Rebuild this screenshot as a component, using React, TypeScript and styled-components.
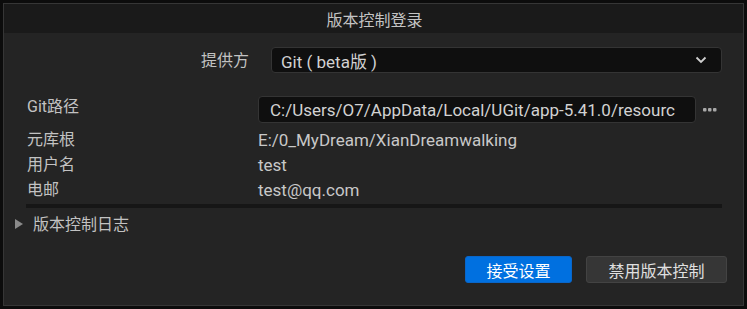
import React from 'react'
import styled, { createGlobalStyle } from 'styled-components'

const GlobalStyle = createGlobalStyle`
  html, body {
    margin: 0;
    padding: 0;
    background: #0c0c0c;
  }
  body {
    font-family: Roboto, 'Noto Sans CJK SC', sans-serif;
  }
`

const Page = styled.div`
  width: 747px;
  height: 309px;
  padding: 3px;
  box-sizing: border-box;
`

const Window = styled.div`
  width: 741px;
  height: 303px;
  box-sizing: border-box;
  border: 1px solid #363636;
  background: #242424;
  display: flex;
  flex-direction: column;
`

const TitleBar = styled.div`
  height: 29px;
  background: #1a1a1a;
  color: #c4c4c4;
  font-size: 16px;
  display: flex;
  align-items: center;
  justify-content: center;
  padding-left: 2px;
`

const Body = styled.div`
  flex: 1;
  display: flex;
  flex-direction: column;
  padding: 14px 21px 0 0;
`

const ProviderRow = styled.div`
  display: flex;
  justify-content: flex-end;
  align-items: center;
  gap: 22px;
`

const Label = styled.div`
  color: #c2c2c2;
  font-size: 16px;
  line-height: 21px;
  white-space: nowrap;
`

const PathLabel = styled(Label)`
  align-self: start;
`

const Dropdown = styled.div`
  width: 451px;
  height: 26px;
  box-sizing: border-box;
  background: #0f0f0f;
  border: 1px solid #343434;
  border-radius: 4px;
  display: flex;
  align-items: center;
  justify-content: space-between;
  padding: 0 14px 0 9px;
  color: #d2d2d2;
  font-size: 17px;
  white-space: pre;
`

const Details = styled.div`
  display: grid;
  grid-template-columns: 231px 1fr;
  grid-template-rows: 31px 25px 25px 25px;
  align-items: center;
  margin-top: 23px;
  padding-left: 23px;
`

const PathCell = styled.div`
  align-self: start;
  display: flex;
  align-items: center;
  gap: 7px;
`

const PathInput = styled.div`
  width: 438px;
  height: 27px;
  box-sizing: border-box;
  background: #0f0f0f;
  border: 1px solid #343434;
  border-radius: 4px;
  display: flex;
  align-items: center;
  padding: 0 0 0 11px;
  overflow: hidden;
  white-space: nowrap;
  color: #d2d2d2;
  font-size: 17px;
`

const Value = styled.div`
  color: #c8c8c8;
  font-size: 17px;
  white-space: nowrap;
`

const Separator = styled.div`
  height: 4px;
  background: #161616;
  margin: 2px 0 0 22px;
`

const LogRow = styled.div`
  height: 24px;
  display: flex;
  align-items: center;
  gap: 10px;
  margin-top: 4px;
  padding-left: 11px;
`

const Triangle = styled.span`
  width: 0;
  height: 0;
  border-top: 5.5px solid transparent;
  border-bottom: 5.5px solid transparent;
  border-left: 8px solid #8a8a8a;
`

const Footer = styled.div`
  display: flex;
  justify-content: flex-end;
  gap: 14px;
  margin-top: 20px;
  margin-right: -5px;
`

const Button = styled.button<{ $primary?: boolean }>`
  height: 27px;
  box-sizing: border-box;
  border-radius: 3px;
  border: 1px solid ${p => (p.$primary ? '#0a66c8' : '#434343')};
  background: ${p => (p.$primary ? '#0070e0' : '#363636')};
  color: ${p => (p.$primary ? '#ffffff' : '#e0e0e0')};
  font-family: Roboto, 'Noto Sans CJK SC', sans-serif;
  font-size: 16px;
  padding: 0;
  width: ${p => (p.$primary ? '107px' : '141px')};
  display: flex;
  align-items: center;
  justify-content: center;
`

const Chevron = () => (
  <svg width="12" height="8" viewBox="0 0 12 8">
    <path d="M1.5 1.5 L6 6 L10.5 1.5" fill="none" stroke="#d0d0d0" strokeWidth="1.8" />
  </svg>
)

const Dots = () => (
  <svg width="14" height="4" viewBox="0 0 14 4">
    <rect x="0" y="0" width="3.5" height="3.5" rx="1" fill="#a8a8a8" />
    <rect x="5" y="0" width="3.5" height="3.5" rx="1" fill="#a8a8a8" />
    <rect x="10" y="0" width="3.5" height="3.5" rx="1" fill="#a8a8a8" />
  </svg>
)

const App = () => {
  return (
    <Page>
      <GlobalStyle />
      <Window>
        <TitleBar>版本控制登录</TitleBar>
        <Body>
          <ProviderRow>
            <Label>提供方</Label>
            <Dropdown>
              <span>Git ( beta版 )</span>
              <Chevron />
            </Dropdown>
          </ProviderRow>
          <Details>
            <PathLabel>Git路径</PathLabel>
            <PathCell>
              <PathInput>C:/Users/O7/AppData/Local/UGit/app-5.41.0/resourc</PathInput>
              <Dots />
            </PathCell>
            <Label>元库根</Label>
            <Value>E:/0_MyDream/XianDreamwalking</Value>
            <Label>用户名</Label>
            <Value>test</Value>
            <Label>电邮</Label>
            <Value>test@qq.com</Value>
          </Details>
          <Separator />
          <LogRow>
            <Triangle />
            <Label>版本控制日志</Label>
          </LogRow>
          <Footer>
            <Button $primary>接受设置</Button>
            <Button>禁用版本控制</Button>
          </Footer>
        </Body>
      </Window>
    </Page>
  )
}

export default App
